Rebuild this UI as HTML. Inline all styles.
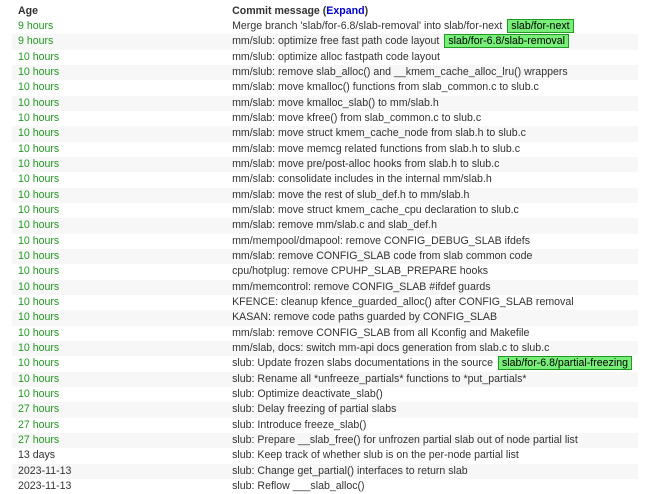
<!DOCTYPE html>
<html><head><meta charset="utf-8"><style>
body{margin:0;background:#fff;font-family:"Liberation Sans","DejaVu Sans",sans-serif;font-size:10.6px;color:#333}
table{position:absolute;left:12px;top:3px;width:626px;border-collapse:collapse}
td,th{padding:0 6px;height:15.33px;line-height:15px;white-space:nowrap;text-align:left}
th{font-weight:bold;color:#333;height:16px}
tr.z td{background:#f7f7f7}
td.a{color:#229922;width:204px}
td.o{color:#333}
a{color:#00c;text-decoration:none}
span.t{background:#77ee77;border:1px solid #229922;padding:0 3px;margin-left:5px;color:#000}
</style></head><body>
<table>
<tr><th>Age</th><th>Commit message (<a>Expand</a>)</th></tr>
<tr><td class="a">9 hours</td><td>Merge branch 'slab/for-6.8/slab-removal' into slab/for-next<span class="t">slab/for-next</span></td></tr>
<tr class="z"><td class="a">9 hours</td><td>mm/slub: optimize free fast path code layout<span class="t">slab/for-6.8/slab-removal</span></td></tr>
<tr><td class="a">10 hours</td><td>mm/slub: optimize alloc fastpath code layout</td></tr>
<tr class="z"><td class="a">10 hours</td><td>mm/slub: remove slab_alloc() and __kmem_cache_alloc_lru() wrappers</td></tr>
<tr><td class="a">10 hours</td><td>mm/slab: move kmalloc() functions from slab_common.c to slub.c</td></tr>
<tr class="z"><td class="a">10 hours</td><td>mm/slab: move kmalloc_slab() to mm/slab.h</td></tr>
<tr><td class="a">10 hours</td><td>mm/slab: move kfree() from slab_common.c to slub.c</td></tr>
<tr class="z"><td class="a">10 hours</td><td>mm/slab: move struct kmem_cache_node from slab.h to slub.c</td></tr>
<tr><td class="a">10 hours</td><td>mm/slab: move memcg related functions from slab.h to slub.c</td></tr>
<tr class="z"><td class="a">10 hours</td><td>mm/slab: move pre/post-alloc hooks from slab.h to slub.c</td></tr>
<tr><td class="a">10 hours</td><td>mm/slab: consolidate includes in the internal mm/slab.h</td></tr>
<tr class="z"><td class="a">10 hours</td><td>mm/slab: move the rest of slub_def.h to mm/slab.h</td></tr>
<tr><td class="a">10 hours</td><td>mm/slab: move struct kmem_cache_cpu declaration to slub.c</td></tr>
<tr class="z"><td class="a">10 hours</td><td>mm/slab: remove mm/slab.c and slab_def.h</td></tr>
<tr><td class="a">10 hours</td><td>mm/mempool/dmapool: remove CONFIG_DEBUG_SLAB ifdefs</td></tr>
<tr class="z"><td class="a">10 hours</td><td>mm/slab: remove CONFIG_SLAB code from slab common code</td></tr>
<tr><td class="a">10 hours</td><td>cpu/hotplug: remove CPUHP_SLAB_PREPARE hooks</td></tr>
<tr class="z"><td class="a">10 hours</td><td>mm/memcontrol: remove CONFIG_SLAB #ifdef guards</td></tr>
<tr><td class="a">10 hours</td><td>KFENCE: cleanup kfence_guarded_alloc() after CONFIG_SLAB removal</td></tr>
<tr class="z"><td class="a">10 hours</td><td>KASAN: remove code paths guarded by CONFIG_SLAB</td></tr>
<tr><td class="a">10 hours</td><td>mm/slab: remove CONFIG_SLAB from all Kconfig and Makefile</td></tr>
<tr class="z"><td class="a">10 hours</td><td>mm/slab, docs: switch mm-api docs generation from slab.c to slub.c</td></tr>
<tr><td class="a">10 hours</td><td>slub: Update frozen slabs documentations in the source<span class="t">slab/for-6.8/partial-freezing</span></td></tr>
<tr class="z"><td class="a">10 hours</td><td>slub: Rename all *unfreeze_partials* functions to *put_partials*</td></tr>
<tr><td class="a">10 hours</td><td>slub: Optimize deactivate_slab()</td></tr>
<tr class="z"><td class="a">27 hours</td><td>slub: Delay freezing of partial slabs</td></tr>
<tr><td class="a">27 hours</td><td>slub: Introduce freeze_slab()</td></tr>
<tr class="z"><td class="a">27 hours</td><td>slub: Prepare __slab_free() for unfrozen partial slab out of node partial list</td></tr>
<tr><td class="o">13 days</td><td>slub: Keep track of whether slub is on the per-node partial list</td></tr>
<tr class="z"><td class="o">2023-11-13</td><td>slub: Change get_partial() interfaces to return slab</td></tr>
<tr><td class="o">2023-11-13</td><td>slub: Reflow ___slab_alloc()</td></tr>
</table>
</body></html>
